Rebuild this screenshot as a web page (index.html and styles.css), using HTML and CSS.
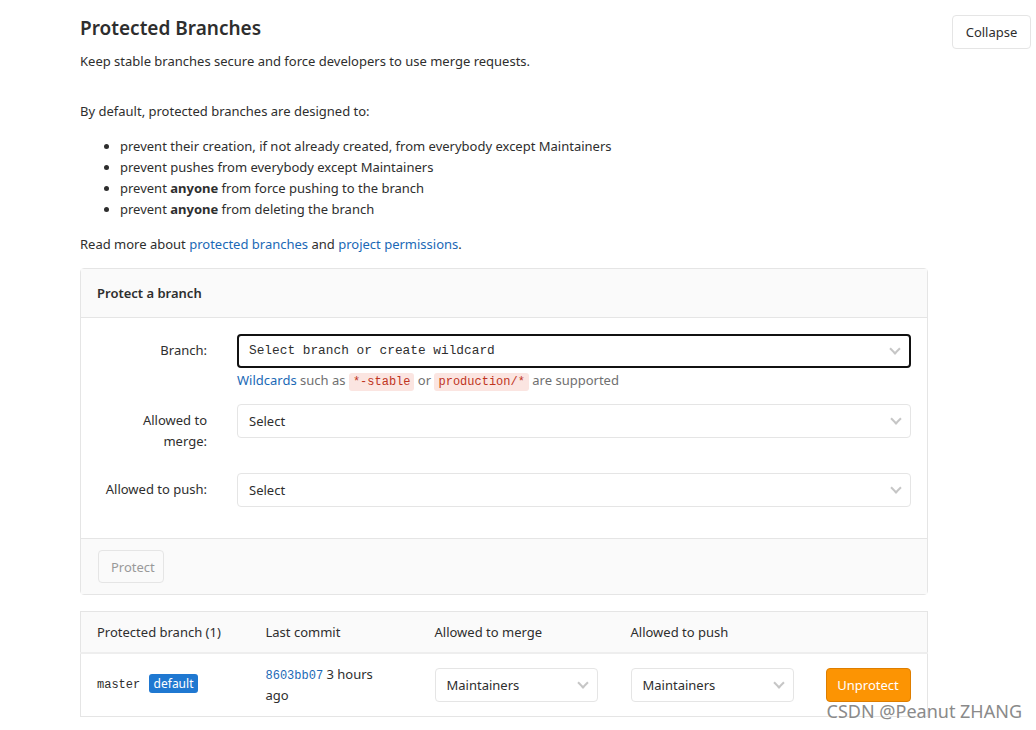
FILE: index.html
```html
<!DOCTYPE html>
<html>
<head>
<meta name="viewport" content="width=device-width, initial-scale=1">
<link rel="stylesheet" href="styles.css">
</head>
<body>

<div class="page">
  <div class="settings">
    <h4 class="title">Protected Branches</h4>
    <p class="lead">Keep stable branches secure and force developers to use merge requests.</p>

    <p class="intro">By default, protected branches are designed to:</p>
    <ul class="rules">
      <li>prevent their creation, if not already created, from everybody except Maintainers</li>
      <li>prevent pushes from everybody except Maintainers</li>
      <li>prevent <strong>anyone</strong> from force pushing to the branch</li>
      <li>prevent <strong>anyone</strong> from deleting the branch</li>
    </ul>
    <p class="more">Read more about <a href="#">protected branches</a> and <a href="#">project permissions</a>.</p>

    <!-- protect form -->
    <div class="panel">
      <div class="panel-head">Protect a branch</div>
      <div class="panel-body">
        <div class="form-row">
          <label class="form-label">Branch:</label>
          <div class="form-field">
            <div class="dropdown focused mono">Select branch or create wildcard<span class="caret"></span></div>
            <div class="hint"><a href="#">Wildcards</a> such as <code>*-stable</code> or <code>production/*</code> are supported</div>
          </div>
        </div>
        <div class="form-row">
          <label class="form-label">Allowed to merge:</label>
          <div class="form-field">
            <div class="dropdown">Select<span class="caret"></span></div>
          </div>
        </div>
        <div class="form-row">
          <label class="form-label">Allowed to push:</label>
          <div class="form-field">
            <div class="dropdown">Select<span class="caret"></span></div>
          </div>
        </div>
      </div>
      <div class="panel-foot">
        <button class="btn btn-disabled">Protect</button>
      </div>
    </div>

    <!-- protected list -->
    <table class="branches">
      <tr>
        <th class="col-name">Protected branch (1)</th>
        <th class="col-commit">Last commit</th>
        <th class="col-merge">Allowed to merge</th>
        <th class="col-push">Allowed to push</th>
        <th></th>
      </tr>
      <tr>
        <td><span class="mono branch-name">master</span> <span class="badge">default</span></td>
        <td><a href="#" class="mono sha">8603bb07</a> 3 hours<br>ago</td>
        <td><div class="dropdown small">Maintainers<span class="caret"></span></div></td>
        <td><div class="dropdown small">Maintainers<span class="caret"></span></div></td>
        <td><button class="btn btn-warning">Unprotect</button></td>
      </tr>
    </table>
  </div>

  <button class="btn btn-collapse">Collapse</button>
</div>

<div class="watermark">CSDN @Peanut ZHANG</div>

</body>
</html>
```

FILE: styles.css
```css
* {box-sizing: border-box}

body, html {
  margin: 0;
  font-family: "Noto Sans", Arial, sans-serif;
  font-size: 13px;
  color: #2e2e2e;
  background: #fff;
}

a {
  color: #1b69b6;
  text-decoration: none;
}

.mono {
  font-family: "Liberation Mono", "DejaVu Sans Mono", monospace;
}

/* page frame */
.page {
  display: flex;
  align-items: flex-start;
  gap: 24px;
  padding: 16px 0 0 80px;
}

.settings {
  width: 848px;
}

.title {
  margin: 0;
  font-size: 19px;
  line-height: 24px;
  font-weight: 600;
}

.lead {
  margin: 11px 0 0;
  line-height: 20px;
}

.intro {
  margin: 30px 0 0;
  line-height: 20px;
}

.rules {
  margin: 15px 0 0;
  padding-left: 40px;
  line-height: 21px;
}

.more {
  margin: 14px 0 0;
  line-height: 20px;
}

/* buttons */
.btn {
  font-family: inherit;
  font-size: 13px;
  height: 34px;
  padding: 0 12px;
  border-radius: 4px;
  border: 1px solid #e5e5e5;
  background: #fff;
  color: #2e2e2e;
}

.btn-collapse {
  margin-top: -1px;
  height: 34px;
  width: 79px;
}

.btn-disabled {
  color: #999;
  background: #fafafa;
  height: 33px;
  width: 66px;
}

.btn-warning {
  background: #fc9403;
  border-color: #de7e00;
  color: #fff;
  width: 85px;
  padding: 0;
}

/* panel */
.panel {
  margin-top: 14px;
  border: 1px solid #e5e5e5;
  border-radius: 4px;
}

.panel-head {
  height: 49px;
  line-height: 48px;
  padding: 0 16px;
  font-weight: 600;
  background: #fafafa;
  border-bottom: 1px solid #e5e5e5;
}

.panel-body {
  padding: 16px 16px 15px;
}

.panel-foot {
  padding: 11px 17px;
  background: #fafafa;
  border-top: 1px solid #e5e5e5;
}

.form-row {
  display: grid;
  grid-template-columns: 110px 1fr;
  column-gap: 30px;
  margin-bottom: 16px;
}

.form-label {
  text-align: right;
  padding: 6px 0 5px;
  line-height: 21px;
}

.dropdown {
  position: relative;
  height: 34px;
  line-height: 32px;
  padding: 0 11px;
  border: 1px solid #e5e5e5;
  border-radius: 4px;
  background: #fff;
}

.dropdown.focused {
  border: 2px solid #111;
  line-height: 30px;
  padding: 0 10px;
  font-size: 12.8px;
}

.caret {
  position: absolute;
  right: 10px;
  top: 50%;
  width: 8px;
  height: 8px;
  margin-top: -6px;
  border-right: 2px solid #c6c6c6;
  border-bottom: 2px solid #c6c6c6;
  transform: rotate(45deg);
}

.hint {
  height: 20px;
  padding-top: 3px;
  line-height: 18px;
  color: #707070;
}

code {
  font-family: "Liberation Mono", "DejaVu Sans Mono", monospace;
  font-size: 12px;
  line-height: 14px;
  color: #c0341d;
  background: #fbe5e1;
  padding: 2px 4px;
  border-radius: 3px;
}

/* list table */
.branches {
  width: 100%;
  margin-top: 16px;
  border-collapse: collapse;
  border: 1px solid #e5e5e5;
}

.branches th {
  height: 41px;
  text-align: left;
  font-weight: normal;
  padding: 0 16px;
  background: #fafafa;
  border-bottom: 2px solid #eee;
}

.branches td {
  padding: 10px 16px;
  line-height: 21px;
  vertical-align: middle;
}

.col-name {width: 169px}
.col-commit {width: 169px}
.col-merge {width: 196px}
.col-push {width: 195px}

.branch-name {
  font-size: 12px;
}

.sha {
  font-size: 12px;
  line-height: 14px;
}

.badge {
  display: inline-block;
  margin-left: 5px;
  padding: 0 5px;
  line-height: 19px;
  font-size: 12px;
  color: #fff;
  background: #1f78d1;
  border-radius: 3px;
}

.dropdown.small {
  width: 163px;
}

.watermark {
  position: absolute;
  right: 14px;
  top: 699px;
  font-family: "Noto Sans", Arial, sans-serif;
  font-size: 18px;
  color: #8a8a8a;
  text-shadow: 0 0 2px #fff;
}
```
